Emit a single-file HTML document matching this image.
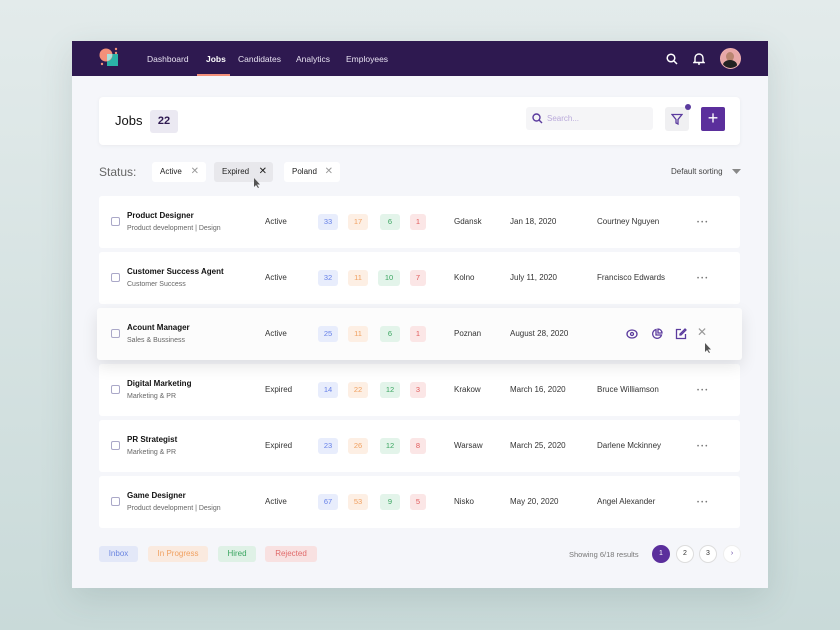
<!DOCTYPE html><html><head><meta charset="utf-8"><style>
*{box-sizing:border-box;margin:0;padding:0}
body{width:840px;height:630px;background:linear-gradient(180deg,#e3ebeb,#c9dad9);font-family:"Liberation Sans",sans-serif;position:relative;overflow:hidden;color:#222}
.card{position:absolute;left:72px;top:41px;width:696px;height:547px;background:#f5f6fa;box-shadow:0 10px 30px rgba(60,90,90,.15)}
.nav{position:absolute;left:0;top:0;width:696px;height:35px;background:#2e1950}
.nav a{position:absolute;top:13px;font-size:8.5px;color:#e8e2f2}
.a{position:absolute}
.jobs{left:27px;top:56px;width:641px;height:48px;background:#fff;border-radius:4px;box-shadow:0 1px 4px rgba(0,0,0,.05)}
.chip{position:absolute;top:121px;height:20px;background:#fff;border-radius:3px;font-size:8px;line-height:20px;padding-left:8px;color:#222}
.row{position:absolute;left:27px;width:641px;height:52px;background:#fff;border-radius:3px}
.row .cb{position:absolute;left:12px;top:21px;width:9px;height:9px;border:1px solid #aaa8c8;border-radius:2px}
.row .t{position:absolute;left:28px;top:15px;font-size:8px;font-weight:bold;color:#111}
.row .s{position:absolute;left:28px;top:29px;font-size:7px;color:#666}
.row .c{position:absolute;top:21px;font-size:8px;color:#333}
.b{position:absolute;top:18px;height:16px;border-radius:3px;font-size:7.5px;line-height:16px;text-align:center}
.b1{left:219px;width:20px;background:#e8edfc;color:#6680e8}
.b2{left:249px;width:20px;background:#fdefe4;color:#f0a060}
.b3{left:281px;width:20px;background:#e3f4ea;color:#3aa560}
.b4{left:311px;width:16px;background:#fbe6e6;color:#e05a5a}
.dots{position:absolute;left:598px;top:24px;font-size:6px;color:#777;letter-spacing:2px}
.tag{position:absolute;top:505px;height:16px;border-radius:3px;font-size:8px;line-height:16px;text-align:center}
.pg{position:absolute;top:504px;width:18px;height:18px;border-radius:50%;background:#fff;border:1px solid #ddd;font-size:7px;line-height:16px;text-align:center;color:#333}
</style></head><body>
<div class="card">
<div class="nav">
<svg class="a" style="left:26px;top:6px" width="24" height="24"><rect x="9" y="7" width="11" height="12" fill="#2bb3a8"/><circle cx="8" cy="8" r="6.5" fill="#f3907a"/><path d="M9 7h5.2A6.5 6.5 0 0 1 9 14z" fill="#a8e0dc"/><circle cx="18" cy="2" r="1.2" fill="#f3907a"/><circle cx="18" cy="6" r="1.2" fill="#f3907a"/><circle cx="4" cy="17" r="1.2" fill="#f3907a"/></svg>
<a style="left:75px">Dashboard</a><a style="left:134px;font-weight:bold;color:#fff">Jobs</a><a style="left:166px">Candidates</a><a style="left:224px">Analytics</a><a style="left:274px">Employees</a>
<div class="a" style="left:125px;top:33px;width:33px;height:2px;background:#f3907a"></div>
<svg class="a" style="left:594px;top:12px" width="12" height="12" fill="none" stroke="#fff" stroke-width="1.5"><circle cx="5" cy="5" r="3.8"/><path d="M8 8l3 3"/></svg>
<svg class="a" style="left:621px;top:11px" width="12" height="13" fill="none" stroke="#fff" stroke-width="1.4"><path d="M2 9.5V6a4 4 0 0 1 8 0v3.5l1 1H1z"/><path d="M5 12h2"/></svg>
<div class="a" style="left:648px;top:7px;width:21px;height:21px;border-radius:50%;background:#e8a8a8;border:1.5px solid #f0b0b0;overflow:hidden"><div style="position:absolute;left:5px;top:3px;width:8px;height:9px;border-radius:50%;background:#b98570"></div><div style="position:absolute;left:2px;top:11px;width:14px;height:10px;border-radius:50% 50% 0 0;background:#222"></div></div>
</div>
<div class="a jobs">
<div class="a" style="left:16px;top:16px;font-size:13px;color:#111">Jobs</div>
<div class="a" style="left:51px;top:13px;width:28px;height:23px;background:#ebe9f2;border-radius:3px;font-size:11px;line-height:23px;text-align:center;color:#2e1950;font-weight:bold">22</div>
<div class="a" style="left:427px;top:10px;width:127px;height:23px;background:#f5f5f7;border-radius:3px"></div>
<svg class="a" style="left:433px;top:16px" width="11" height="11" fill="none" stroke="#5b3b9e" stroke-width="1.4"><circle cx="4.5" cy="4.5" r="3.5"/><path d="M7 7l3 3"/></svg>
<div class="a" style="left:448px;top:17px;font-size:8px;color:#b9a9da">Search...</div>
<div class="a" style="left:566px;top:10px;width:24px;height:24px;background:#f0f0f2;border-radius:3px"></div>
<svg class="a" style="left:572px;top:16px" width="12" height="12" fill="none" stroke="#5b3b9e" stroke-width="1.3"><path d="M1 1.5h10L7 6.5V11L5 10V6.5z"/></svg>
<div class="a" style="left:586px;top:7px;width:6px;height:6px;border-radius:50%;background:#5b3b9e"></div>
<div class="a" style="left:602px;top:10px;width:24px;height:24px;background:#5b2f9c;border-radius:2px;color:#fff;font-size:18px;line-height:23px;text-align:center">+</div>
</div>
<div class="a" style="left:27px;top:124px;font-size:12px;color:#666">Status:</div>
<div class="chip" style="left:80px;width:54px">Active <span style="position:absolute;right:7px;color:#999;font-size:10px">✕</span></div>
<div class="chip" style="left:142px;width:59px;background:#e8e8ec">Expired <span style="position:absolute;right:6px;color:#222;font-size:10px">✕</span></div>
<div class="chip" style="left:212px;width:56px">Poland <span style="position:absolute;right:7px;color:#999;font-size:10px">✕</span></div>
<svg class="a" style="left:181px;top:136px" width="8" height="12"><path d="M1 1v9l2-2 2 3 1-.5-2-3h3z" fill="#555"/></svg>
<div class="a" style="left:599px;top:126px;font-size:8px;color:#444">Default sorting</div>
<svg class="a" style="left:660px;top:128px" width="9" height="6"><path d="M0 0h9L4.5 5z" fill="#888"/></svg>

<div class="row" style="top:155px"><div class="cb"></div><div class="t">Product Designer</div><div class="s">Product development | Design</div><div class="c" style="left:166px">Active</div><div class="b b1">33</div><div class="b b2">17</div><div class="b b3">6</div><div class="b b4">1</div><div class="c" style="left:355px">Gdansk</div><div class="c" style="left:411px">Jan 18, 2020</div><div class="c" style="left:498px">Courtney Nguyen</div><div class="dots">•••</div></div>
<div class="row" style="top:211px"><div class="cb"></div><div class="t">Customer Success Agent</div><div class="s">Customer Success</div><div class="c" style="left:166px">Active</div><div class="b b1">32</div><div class="b b2">11</div><div class="b b3" style="left:279px;width:22px">10</div><div class="b b4">7</div><div class="c" style="left:355px">Kolno</div><div class="c" style="left:411px">July 11, 2020</div><div class="c" style="left:498px">Francisco Edwards</div><div class="dots">•••</div></div>
<div class="row" style="top:323px"><div class="cb"></div><div class="t">Digital Marketing</div><div class="s">Marketing &amp; PR</div><div class="c" style="left:166px">Expired</div><div class="b b1">14</div><div class="b b2">22</div><div class="b b3">12</div><div class="b b4">3</div><div class="c" style="left:355px">Krakow</div><div class="c" style="left:411px">March 16, 2020</div><div class="c" style="left:498px">Bruce Williamson</div><div class="dots">•••</div></div>
<div class="row" style="top:379px"><div class="cb"></div><div class="t">PR Strategist</div><div class="s">Marketing &amp; PR</div><div class="c" style="left:166px">Expired</div><div class="b b1">23</div><div class="b b2">26</div><div class="b b3">12</div><div class="b b4">8</div><div class="c" style="left:355px">Warsaw</div><div class="c" style="left:411px">March 25, 2020</div><div class="c" style="left:498px">Darlene Mckinney</div><div class="dots">•••</div></div>
<div class="row" style="top:435px"><div class="cb"></div><div class="t">Game Designer</div><div class="s">Product development | Design</div><div class="c" style="left:166px">Active</div><div class="b b1">67</div><div class="b b2">53</div><div class="b b3">9</div><div class="b b4">5</div><div class="c" style="left:355px">Nisko</div><div class="c" style="left:411px">May 20, 2020</div><div class="c" style="left:498px">Angel Alexander</div><div class="dots">•••</div></div>
<div class="row" style="top:267px;left:25px;width:645px;background:#fcfcfc;box-shadow:0 6px 16px rgba(0,0,0,.1)"><div style="position:absolute;left:2px;top:0;width:641px;height:52px"><div class="cb"></div><div class="t">Acount Manager</div><div class="s">Sales &amp; Bussiness</div><div class="c" style="left:166px">Active</div><div class="b b1">25</div><div class="b b2">11</div><div class="b b3">6</div><div class="b b4">1</div><div class="c" style="left:355px">Poznan</div><div class="c" style="left:411px">August 28, 2020</div>
<svg class="a" style="left:527px;top:20px" width="12" height="12" fill="none" stroke="#5b3b9e" stroke-width="1.3"><ellipse cx="6" cy="6" rx="5" ry="4"/><circle cx="6" cy="6" r="1.5"/></svg>
<svg class="a" style="left:552px;top:20px" width="12" height="12" fill="none" stroke="#5b3b9e" stroke-width="1.3"><path d="M5 1.5A4.5 4.5 0 1 0 10.5 7H5z"/><path d="M7 1a4 4 0 0 1 4 4H7z"/></svg>
<svg class="a" style="left:576px;top:20px" width="12" height="12" fill="none" stroke="#5b3b9e" stroke-width="1.3"><path d="M6 1.5H1.5v9h9V6"/><path d="M10 1l1 1-5 5H5V6z"/></svg>
<div class="a" style="left:598px;top:17px;font-size:12px;color:#999">✕</div>
<svg class="a" style="left:605px;top:34px" width="8" height="12"><path d="M1 1v9l2-2 2 3 1-.5-2-3h3z" fill="#555"/></svg></div></div>

<div class="tag" style="left:27px;width:39px;background:#e3e8f8;color:#6a85e0">Inbox</div>
<div class="tag" style="left:76px;width:60px;background:#faeadf;color:#f0a060">In Progress</div>
<div class="tag" style="left:146px;width:38px;background:#dff1e6;color:#3aa560">Hired</div>
<div class="tag" style="left:193px;width:52px;background:#f8e1e1;color:#e06a6a">Rejected</div>
<div class="a" style="left:497px;top:509px;font-size:7.5px;color:#777">Showing 6/18 results</div>
<div class="pg" style="left:580px;background:#5b2f9c;border-color:#5b2f9c;color:#fff">1</div>
<div class="pg" style="left:604px">2</div>
<div class="pg" style="left:627px">3</div>
<div class="pg" style="left:651px;color:#5b3b9e;border-color:#eee">›</div>
</div>
</body></html>
